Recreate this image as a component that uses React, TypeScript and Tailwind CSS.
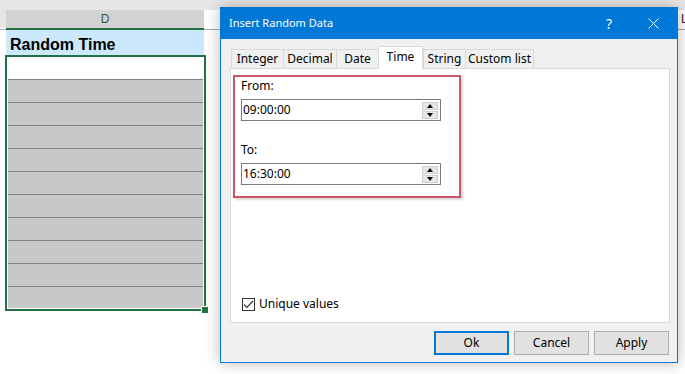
import React from "react";

const Spinner = () => (
  <div className="flex flex-col w-[16px] h-[17px] mr-[2px] gap-[1px]">
    <div className="flex-1 bg-[#e6e6e6] border border-[#cfcfcf] flex items-center justify-center">
      <svg width="6" height="4" viewBox="0 0 6 4"><path d="M0 4 L3 0 L6 4 Z" fill="#000" /></svg>
    </div>
    <div className="flex-1 bg-[#e6e6e6] border border-[#cfcfcf] flex items-center justify-center">
      <svg width="6" height="4" viewBox="0 0 6 4"><path d="M0 0 L6 0 L3 4 Z" fill="#000" /></svg>
    </div>
  </div>
);

const TimeInput = ({ value }: { value: string }) => (
  <div className="w-[200px] h-[22px] border border-[#7a7a7a] bg-white flex items-center justify-between">
    <span className="pl-[1px] text-[12px] text-black leading-none">{value}</span>
    <Spinner />
  </div>
);

const tabs = [
  { label: "Integer", w: "w-[52px]" },
  { label: "Decimal", w: "w-[53px]" },
  { label: "Date", w: "w-[42px]" },
  { label: "Time", w: "w-[45px]", active: true },
  { label: "String", w: "w-[42px]" },
  { label: "Custom list", w: "w-[69px]" },
];

export default function App() {
  const grayRows = Array.from({ length: 9 });
  return (
    <div className="relative w-[685px] h-[374px] bg-white overflow-hidden font-['Noto_Sans',sans-serif]">
      {/* Spreadsheet */}
      <div className="h-[10px] bg-[#e6e6e6]" />
      <div className="flex h-[18px]">
        <div className="w-[6px] bg-[#e6e6e6]" />
        <div className="w-[198px] bg-[#d2d2d2] flex items-center justify-center text-[12px] text-[#2d5a40] font-['Liberation_Sans',sans-serif]">
          D
        </div>
        <div className="flex-1 bg-white pl-[477px] text-[12px] text-[#222] leading-[18px] font-['Liberation_Sans',sans-serif] overflow-hidden whitespace-nowrap">
          L
        </div>
      </div>
      <div className="flex h-[2px]">
        <div className="w-[6px] border-b border-[#a8a8a8]" />
        <div className="w-[198px] bg-[#217346]" />
        <div className="flex-1 border-b border-[#a8a8a8]" />
      </div>
      <div className="flex h-[25px]">
        <div className="w-[6px]" />
        <div className="w-[198px] bg-[#cce8fc] pl-[4px] pt-[6px] text-[16px] font-bold leading-[18px] text-black font-['Liberation_Sans',sans-serif]">
          Random Time
        </div>
      </div>
      <div className="ml-[5px] w-[201px] h-[256px] border-2 border-[#217346] bg-white p-[1px] flex flex-col">
        <div className="h-[21px] bg-white border-b border-[#828282] box-content" />
        {grayRows.map((_, i) => (
          <div key={i} className="h-[22px] bg-[#c8c8c8] border-b border-[#828282] box-content" />
        ))}
        <div className="h-[21px] bg-[#c8c8c8]" />
      </div>
      <div className="absolute left-[201px] top-[306px] w-[7px] h-[7px] bg-[#217346] border-l border-t border-white" />

      {/* Dialog */}
      <div className="absolute left-[220px] top-[7px] w-[458px] h-[356px] border border-[#0078d7] bg-[#f0f0f0] shadow-[0_0_14px_rgba(0,0,0,0.28)] flex flex-col">
        <div className="h-[31px] bg-[#0078d7] flex items-center pl-[8px] pr-[12px] text-white shrink-0">
          <span className="text-[11px] flex-1">Insert Random Data</span>
          <span className="text-[14px] font-normal mr-[36px] leading-none">?</span>
          <svg width="11" height="11" viewBox="0 0 11 11" className="mr-[6px]">
            <path d="M0.5 0.5 L10.5 10.5 M10.5 0.5 L0.5 10.5" stroke="#fff" strokeWidth="1" />
          </svg>
        </div>
        <div className="flex-1 flex flex-col pl-[9px] pr-[7px] pt-[7px]">
          <div className="flex h-[22px] pl-[1px] items-end relative z-10">
            {tabs.map((t) =>
              t.active ? (
                <div
                  key={t.label}
                  className={`${t.w} h-[23px] -mb-[1px] bg-white border border-b-0 border-[#d9d9d9] flex items-center justify-center text-[12px] text-black pb-[2px]`}
                >
                  {t.label}
                </div>
              ) : (
                <div
                  key={t.label}
                  className={`${t.w} h-[19px] border border-b-0 border-r-0 last:border-r border-[#d9d9d9] flex items-center justify-center text-[12px] text-black`}
                >
                  {t.label}
                </div>
              )
            )}
          </div>
          <div className="w-[440px] h-[255px] bg-white border border-[#d9d9d9] flex flex-col pl-[2px] pt-[6px]">
            <div className="w-[228px] border-2 border-[#cf5468] shadow-[2px_2px_2px_rgba(0,0,0,0.15)] pl-[6px] pt-[1px] pb-[11px]">
              <div className="text-[12px] leading-[16px] text-black">From:</div>
              <div className="mt-[5px]">
                <TimeInput value="09:00:00" />
              </div>
              <div className="text-[12px] leading-[16px] text-black mt-[21px]">To:</div>
              <div className="mt-[5px]">
                <TimeInput value="16:30:00" />
              </div>
            </div>
            <div className="flex-1" />
            <div className="flex items-center pl-[9px] mb-[10px]">
              <div className="w-[13px] h-[13px] border border-[#333] bg-white flex items-center justify-center">
                <svg width="11" height="9" viewBox="0 0 11 9">
                  <path d="M1 4.5 L4 7.5 L10 1" stroke="#333" strokeWidth="1.2" fill="none" />
                </svg>
              </div>
              <span className="ml-[4px] text-[12px] text-black leading-[16px]">Unique values</span>
            </div>
          </div>
          <div className="flex justify-end gap-[5px] mt-[8px] pr-[1px]">
            <button className="w-[75px] h-[24px] bg-[#e1e1e1] border-2 border-[#0078d7] text-[12px] text-black">Ok</button>
            <button className="w-[75px] h-[24px] bg-[#e1e1e1] border border-[#adadad] text-[12px] text-black">Cancel</button>
            <button className="w-[75px] h-[24px] bg-[#e1e1e1] border border-[#adadad] text-[12px] text-black">Apply</button>
          </div>
        </div>
      </div>
    </div>
  );
}
